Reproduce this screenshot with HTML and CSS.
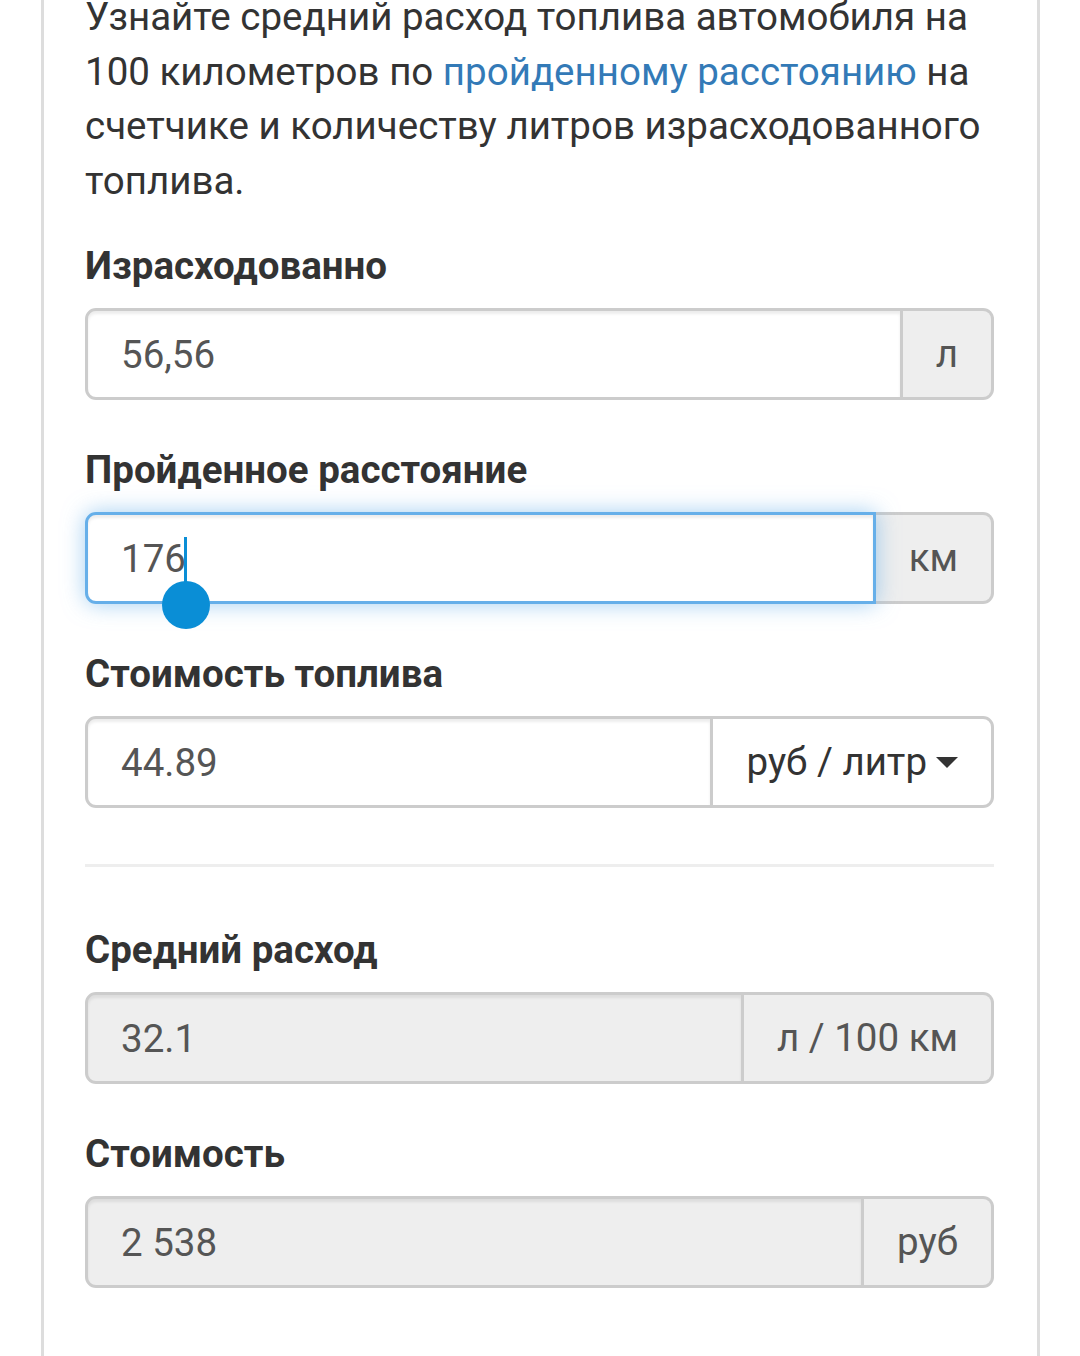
FILE: index.html
```html
<!DOCTYPE html>
<html lang="ru">

<head>
    <meta charset="UTF-8">
    <meta name="viewport" content="width=device-width, initial-scale=1.0">
    <title>Расход топлива</title>
    <link rel="stylesheet" href="styles.css">
</head>

<body>

    <div class="calc">
        <p class="calc__intro">Узнайте средний расход топлива автомобиля на 100 километров по
            <a href="#" class="calc__link">пройденному расстоянию</a> на счетчике и количеству литров
            израсходованного топлива.</p>

        <div class="form-group">
            <label class="form-label">Израсходованно</label>
            <div class="input-group">
                <input type="text" class="form-control" value="56,56">
                <span class="input-group__addon">л</span>
            </div>
        </div>

        <div class="form-group">
            <label class="form-label">Пройденное расстояние</label>
            <div class="input-group">
                <input type="text" class="form-control form-control--focus" value="176">
                <span class="input-group__addon">км</span>
                <span class="text-cursor"></span>
                <span class="text-cursor__handle"></span>
            </div>
        </div>

        <div class="form-group">
            <label class="form-label">Стоимость топлива</label>
            <div class="input-group">
                <input type="text" class="form-control" value="44.89">
                <button class="input-group__btn">руб / литр <span class="caret"></span></button>
            </div>
        </div>

        <hr class="calc__divider">

        <div class="form-group">
            <label class="form-label">Средний расход</label>
            <div class="input-group">
                <input type="text" class="form-control" value="32.1" disabled>
                <span class="input-group__addon">л / 100 км</span>
            </div>
        </div>

        <div class="form-group">
            <label class="form-label">Стоимость</label>
            <div class="input-group">
                <input type="text" class="form-control" value="2 538" disabled>
                <span class="input-group__addon">руб</span>
            </div>
        </div>
    </div>

</body>

</html>
```

FILE: styles.css
```css
body{
    margin: 0;
    width: 100%;
    font-family: Roboto, "Noto Sans", sans-serif;
    font-size: 38.5px;
    line-height: 54.5px;
    color: #333;
    background-color: #fff;
    overflow: hidden;
}

.calc{
    margin: 0 40px 0 41px;
    padding: 0 43px 80px 41px;
    border-left: 3px solid #ddd;
    border-right: 3px solid #ddd;
    min-height: 1400px;
}

.calc__intro{
    margin: -10px 0 31px;
}

.calc__link{
    color: #337ab7;
    text-decoration: none;
}

.form-group{
    margin-bottom: 43px;
}

.form-label{
    display: block;
    font-weight: 700;
    margin-bottom: 14.5px;
}

.input-group{
    position: relative;
    display: flex;
    height: 92px;
}

.form-control{
    flex: 1;
    min-width: 0;
    height: 92px;
    box-sizing: border-box;
    margin: 0;
    padding: 0 33px;
    font: inherit;
    color: #555;
    background-color: #fff;
    border: 3px solid #ccc;
    border-radius: 11px 0 0 11px;
    box-shadow: inset 0 3px 3px rgba(0,0,0,.075);
    outline: none;
}

.form-control--focus{
    position: relative;
    z-index: 2;
    border-color: #66afe9;
    box-shadow: inset 0 3px 3px rgba(0,0,0,.075), 0 0 22px rgba(102,175,233,.6);
}

.form-control:disabled{
    background-color: #eee;
    color: #555;
    -webkit-text-fill-color: #555;
    opacity: 1;
}

.input-group__addon{
    display: flex;
    align-items: center;
    padding: 0 33px;
    color: #555;
    background-color: #eee;
    border: 3px solid #ccc;
    border-left: 0;
    border-radius: 0 11px 11px 0;
    white-space: nowrap;
}

.input-group__btn{
    display: flex;
    align-items: center;
    margin: 0 0 0 -3px;
    padding: 0 33px;
    font: inherit;
    color: #333;
    background-color: #fff;
    border: 3px solid #ccc;
    border-radius: 0 11px 11px 0;
    white-space: nowrap;
}

.caret{
    display: inline-block;
    width: 0;
    height: 0;
    margin-left: 9px;
    border-top: 11px solid #333;
    border-left: 11px solid transparent;
    border-right: 11px solid transparent;
}

.calc__divider{
    margin: 56px 0 56px;
    border: 0;
    border-top: 3px solid #eee;
}

/* selection cursor drawn by the phone over the focused field */
.text-cursor{
    position: absolute;
    z-index: 3;
    left: 99px;
    top: 25px;
    width: 3px;
    height: 64px;
    background-color: #0a8ed6;
}

.text-cursor__handle{
    position: absolute;
    z-index: 3;
    left: 77px;
    top: 69px;
    width: 48px;
    height: 48px;
    border-radius: 50%;
    background-color: #0a8ed6;
}
```
